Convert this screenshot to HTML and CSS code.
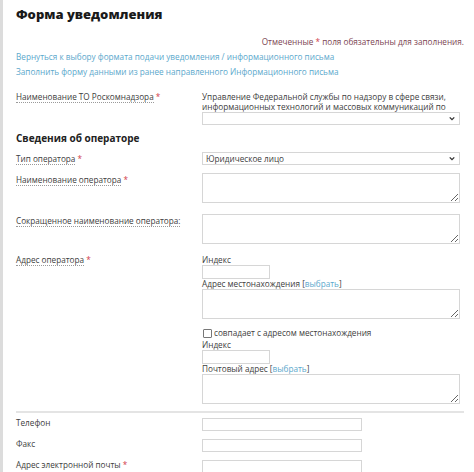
FILE: index.html
```html
<!DOCTYPE html>
<html lang="ru">
<head>
<meta charset="utf-8">
<title>Форма уведомления</title>
<link rel="stylesheet" href="styles.css">
</head>
<body>
<div class="page">
  <h1 class="title">Форма уведомления</h1>
  <p class="note">Отмеченные <span class="req">*</span> поля обязательны для заполнения.</p>
  <a class="link first" href="#">Вернуться к выбору формата подачи уведомления / информационного письма</a>
  <a class="link" href="#">Заполнить форму данными из ранее направленного Информационного письма</a>

  <div class="row row-to">
    <div class="label"><span class="dotted">Наименование ТО Роскомнадзора</span> <span class="req">*</span></div>
    <div class="field">
      <div class="static">Управление Федеральной службы по надзору в сфере связи, информационных технологий и массовых коммуникаций по</div>
      <div class="select wide"><span></span><svg class="chev" viewBox="0 0 8 6" width="6" height="5"><path d="M1 1.5 L4 4.5 L7 1.5" fill="none" stroke="#333" stroke-width="1.8"/></svg></div>
    </div>
  </div>

  <h2 class="section">Сведения об операторе</h2>

  <div class="row row-type">
    <div class="label"><span class="dotted">Тип оператора</span> <span class="req">*</span></div>
    <div class="field">
      <div class="select wide"><span>Юридическое лицо</span><svg class="chev" viewBox="0 0 8 6" width="6" height="5"><path d="M1 1.5 L4 4.5 L7 1.5" fill="none" stroke="#333" stroke-width="1.8"/></svg></div>
    </div>
  </div>

  <div class="row row-name">
    <div class="label"><span class="dotted">Наименование оператора</span> <span class="req">*</span></div>
    <div class="field"><textarea class="area"></textarea></div>
  </div>

  <div class="row row-short">
    <div class="label"><span class="dotted">Сокращенное наименование оператора:</span></div>
    <div class="field"><textarea class="area"></textarea></div>
  </div>

  <div class="row row-addr">
    <div class="label"><span class="dotted">Адрес оператора</span> <span class="req">*</span></div>
    <div class="field">
      <div class="sub">Индекс</div>
      <input class="input idx" type="text">
      <div class="sub">Адрес местонахождения [<a href="#" class="pick">выбрать</a>]</div>
      <textarea class="area"></textarea>
      <label class="check"><span class="box"></span>совпадает с адресом местонахождения</label>
      <div class="sub">Индекс</div>
      <input class="input idx" type="text">
      <div class="sub">Почтовый адрес [<a href="#" class="pick">выбрать</a>]</div>
      <textarea class="area"></textarea>
    </div>
  </div>

  <hr class="sep">

  <div class="row row-short-input">
    <div class="label">Телефон</div>
    <div class="field"><input class="input mid" type="text"></div>
  </div>
  <div class="row row-short-input">
    <div class="label">Факс</div>
    <div class="field"><input class="input mid" type="text"></div>
  </div>
  <div class="row row-short-input">
    <div class="label">Адрес электронной почты <span class="req">*</span></div>
    <div class="field"><input class="input mid" type="text"></div>
  </div>
</div>
</body>
</html>
```

FILE: styles.css
```css
html, body {
  margin: 0;
  padding: 0;
  background: #ffffff;
}
body {
  font-family: "Open Sans", "Noto Sans", sans-serif;
  font-size: 8.2px;
  color: #404040;
  overflow: hidden;
}
.page {
  border-left: 3px solid #dcdcdc;
  padding: 3px 10px 0 13px;
  min-height: 472px;
  box-sizing: border-box;
}
.title {
  margin: 0;
  font-size: 13px;
  line-height: 22px;
  font-weight: 800;
  color: #1a1a1a;
}
.note {
  margin: 12px 0 0;
  text-align: right;
  line-height: 10px;
  color: #7b4552;
}
.req {
  color: #d2404a;
}
.link {
  display: block;
  margin-top: 5px;
  line-height: 10px;
  color: #5ba8cc;
  text-decoration: none;
}
.link.first {
  margin-top: 5px;
}
.row {
  display: grid;
  grid-template-columns: 186px 258px;
}
.label {
  line-height: 13px;
}
.dotted {
  border-bottom: 1px dotted #9a9a9a;
}
.row-to {
  margin-top: 15px;
}
.row-to .label {
  line-height: 10px;
}
.static {
  line-height: 10px;
}
.select {
  height: 13px;
  border: 1px solid #d6d6d6;
  box-sizing: border-box;
  display: flex;
  align-items: center;
  justify-content: space-between;
  padding: 0 4px 0 3px;
  line-height: 11px;
  background: #fff;
}
.chev {
  display: block;
}
.section {
  margin: 6px 0 0;
  font-size: 10px;
  line-height: 14px;
  font-weight: 700;
  color: #222;
}
.row-type {
  margin-top: 7px;
}
.area {
  display: block;
  width: 258px;
  height: 30px;
  margin: 0;
  border: 1px solid #d6d6d6;
  box-sizing: border-box;
  font: inherit;
  padding: 2px;
  resize: vertical;
}
.row-name {
  margin-top: 8px;
}
.row-short {
  margin-top: 11px;
}
.row-addr {
  margin-top: 11px;
}
.row-addr .label {
  line-height: 10px;
}
.sub {
  line-height: 10px;
}
.pick {
  color: #5ba8cc;
  text-decoration: none;
}
.input {
  display: block;
  margin: 0;
  height: 14px;
  border: 1px solid #d6d6d6;
  box-sizing: border-box;
  padding: 0 2px;
  font: inherit;
}
.idx {
  width: 68px;
}
.mid {
  width: 160px;
  height: 13px;
}
.check {
  display: flex;
  align-items: center;
  margin-top: 9px;
  line-height: 10px;
  height: 10px;
}
.box {
  display: inline-block;
  width: 7px;
  height: 7px;
  border: 1px solid #777;
  border-radius: 1px;
  margin: 0 2px 0 1px;
}
.check + .sub {
  margin-top: 2px;
}
.sep {
  margin: 7px 0 0;
  border: 0;
  border-top: 2px solid #e4e4e4;
  height: 0;
}
.row-short-input {
  margin-top: 5px;
}
.row-short-input + .row-short-input {
  margin-top: 8px;
}
.row-short-input .label {
  line-height: 9px;
}
```
